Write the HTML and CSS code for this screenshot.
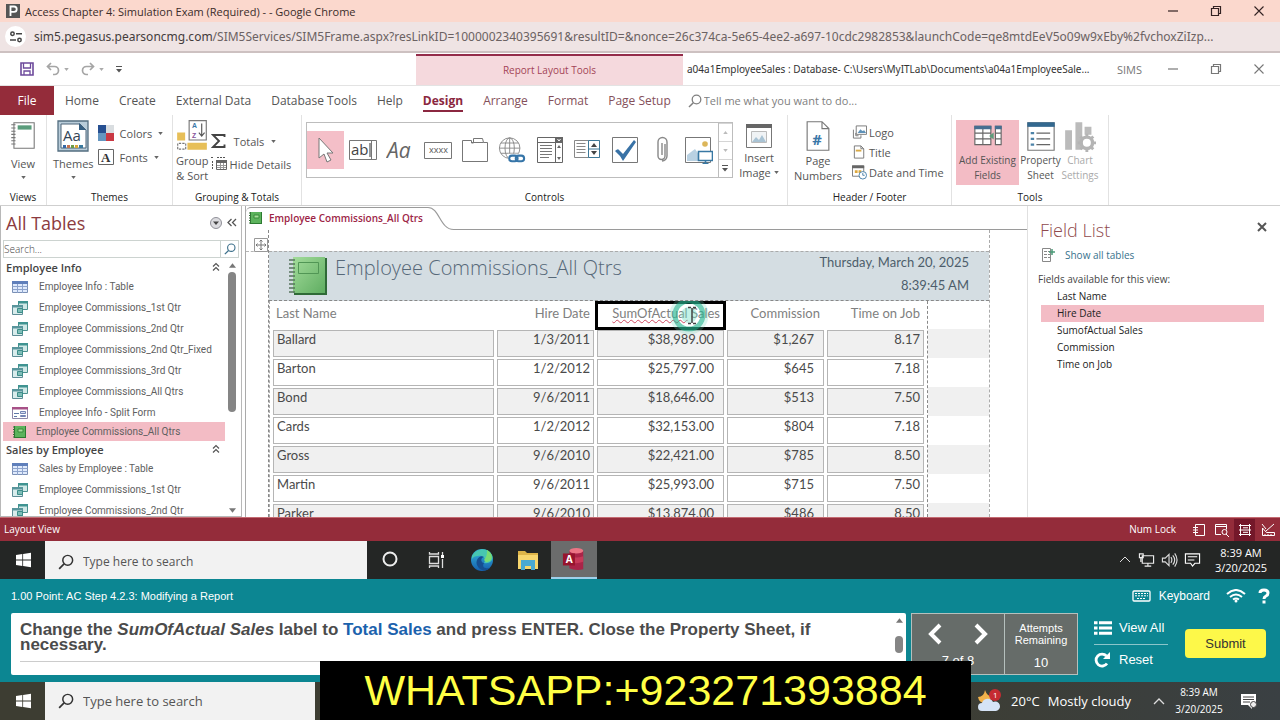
FILE: index.html
```html
<!DOCTYPE html>
<html lang="en">
<head>
<meta charset="utf-8">
<title>Access Chapter 4: Simulation Exam (Required)</title>
<link rel="stylesheet" href="styles.css">
</head>
<body>
<svg class="defs" aria-hidden="true">
  <defs>
    <linearGradient id="green" x1="0" y1="0" x2="1" y2="1"><stop offset="0" stop-color="#a3dc9b"/><stop offset="1" stop-color="#5fad61"/></linearGradient>
    <linearGradient id="edgeblue" x1="0" y1="0" x2="0" y2="1"><stop offset="0" stop-color="#35b6d8"/><stop offset="1" stop-color="#1560b0"/></linearGradient>
  </defs>
  <symbol id="search" viewBox="0 0 14 14"><circle cx="8.5" cy="5.5" r="4.3" fill="none" stroke="currentColor" stroke-width="1.3"/><path d="M5.3 8.7 1 13" stroke="currentColor" stroke-width="1.5"/></symbol>
  <symbol id="min" viewBox="0 0 12 12"><path d="M1 6h10" stroke="currentColor" stroke-width="1.2"/></symbol>
  <symbol id="restore" viewBox="0 0 12 12"><path d="M1.500 3.500h7v7h-7zM3.500 3.500v-2h7v7h-2" fill="none" stroke="currentColor" stroke-width="1.2"/></symbol>
  <symbol id="close" viewBox="0 0 12 12"><path d="m1.500 1.500 9 9m0-9-9 9" stroke="currentColor" stroke-width="1.100"/></symbol>
  <symbol id="win" viewBox="0 0 16 16"><path fill="#fff" d="M1 2.900 7.300 2v5.600H1zM8.100 1.900 16 .8v6.800H8.100zM1 8.400h6.300V14L1 13.100zM8.100 8.400H16v6.800l-7.900-1.100z"/></symbol>
  <symbol id="table" viewBox="0 0 16 14"><path fill="#dfeafc" stroke="#7b90b5" d="M.5 1.500h15v11H.5z"/><path fill="#5f7fbb" d="M0 1h16v3H0z"/><path stroke="#8da3cc" d="M.5 6.500h15M.5 9.500h15M5.500 4v9M10.500 4v9"/></symbol>
  <symbol id="query" viewBox="0 0 16 14"><path fill="#cfe8e6" stroke="#4c918f" d="M6.500.500h9v8h-9z"/><path fill="#3f9391" d="M6 0h10v2.500H6z"/><path fill="#d8ecec" stroke="#5d8d96" d="M.5 4.500h10v9h-10z"/><path fill="#58959c" d="M0 4h11v2.500H0z"/><path d="M5.500 7.500h5v4h-5z" fill="#7fbdb8" stroke="#3b8d88"/></symbol>
  <symbol id="form" viewBox="0 0 16 14"><path fill="#fff" stroke="#8d86a8" d="M.5 1.500h15v11H.5z"/><path fill="#a75187" d="M0 1h16v2.500H0z"/><path stroke="#5f79a8" d="M2 7.500h5M2 10.500h3"/><path fill="#d8dff0" stroke="#7385b5" d="M8.500 5.500h5v2h-5zM8.500 9.500h5v1h-5z"/></symbol>
  <symbol id="book" viewBox="0 0 14 14"><path fill="#2c7a31" d="M2 1h12v12H2z"/><path fill="#5cb35c" d="M3 1h10v11H3z"/><path d="M6 4h5v3H6z" fill="#a8df9c" stroke="#388b3b"/><path d="M1 2h2M1 4.500h2M1 7h2M1 9.500h2M1 12h2" stroke="#366e39"/></symbol>
  <symbol id="chev2" viewBox="0 0 8 10"><path d="m1 4.500 3-3 3 3m-6 4 3-3 3 3" fill="none" stroke="#555" stroke-width="1.200"/></symbol>
  <symbol id="down" viewBox="0 0 6 4"><path d="M0 0h6L3 4z" fill="currentColor"/></symbol>
</svg>

<header class="chrome-title">
  <svg class="i14" viewBox="0 0 14 14"><path fill="#555" d="M0 0h14v14H0z"/><path d="M4.500 12V2.500h3.500a2.700 2.700 0 0 1 0 5.400H4.500" fill="none" stroke="#fff" stroke-width="1.800"/></svg>
  <span class="grow">Access Chapter 4: Simulation Exam (Required) - - Google Chrome</span>
  <div class="winbtns"><button aria-label="Minimize"><svg><use href="#min"/></svg></button><button aria-label="Restore"><svg><use href="#restore"/></svg></button><button aria-label="Close"><svg><use href="#close"/></svg></button></div>
</header>
<div class="urlbar">
  <button class="site" aria-label="Site information"><svg viewBox="0 0 14 14"><g fill="none" stroke="#444" stroke-width="1.500"><circle cx="3.500" cy="3.800" r="1.700"/><path d="M7 3.800h6M1 10h6"/><circle cx="10.500" cy="10" r="1.700"/></g></svg></button>
  <span class="url"><b>sim5.pegasus.pearsoncmg.com</b>/SIM5Services/SIM5Frame.aspx?resLinkID=1000002340395691&amp;resultID=&amp;nonce=26c374ca-5e65-4ee2-a697-10cdc2982853&amp;launchCode=qe8mtdEeV5o09w9xEby%2fvchoxZiIzp...</span>
</div>

<div class="app-title">
  <div class="quick">
    <button aria-label="Save"><svg class="i14" viewBox="0 0 14 14"><path d="M1 1h12v12H1z" fill="#fff" stroke="#6d4a9c" stroke-width="1.600"/><path d="M3.500 1v5h7V1M4 13V9h6v4" fill="none" stroke="#6d4a9c" stroke-width="1.300"/></svg></button>
    <button aria-label="Undo"><svg class="i14" viewBox="0 0 14 14"><path d="M5 1 1.500 4.500 5 8M2 4.500h6.500a4 4 0 0 1 0 8H7" fill="none" stroke="#a5a5a5" stroke-width="1.700"/></svg><svg class="arr"><use href="#down"/></svg></button>
    <button aria-label="Redo"><svg class="i14" viewBox="0 0 14 14"><path d="m9 1 3.500 3.500L9 8M12 4.500H5.500a4 4 0 0 0 0 8H7" fill="none" stroke="#a5a5a5" stroke-width="1.700"/></svg><svg class="arr"><use href="#down"/></svg></button>
    <button aria-label="Customize toolbar"><svg class="more" viewBox="0 0 6 7"><path d="M0 .5h6" stroke="#555"/><path d="M0 3h6L3 6.500z" fill="#555"/></svg></button>
  </div>
  <div class="context">Report Layout Tools</div>
  <span class="db">a04a1EmployeeSales : Database- C:\Users\MyITLab\Documents\a04a1EmployeeSale...</span>
  <span class="sims">SIMS</span>
  <div class="winbtns pale"><button aria-label="Minimize database"><svg><use href="#min"/></svg></button><button aria-label="Restore database"><svg><use href="#restore"/></svg></button><button aria-label="Close database"><svg><use href="#close"/></svg></button></div>
</div>

<nav class="tabs">
  <button class="file">File</button><button>Home</button><button>Create</button><button>External Data</button><button>Database Tools</button><button>Help</button>
  <button class="ctx active">Design</button><button class="ctx">Arrange</button><button class="ctx">Format</button><button class="ctx">Page Setup</button>
  <label class="tell"><svg class="i14"><use href="#search"/></svg><input type="text" placeholder="Tell me what you want to do..." aria-label="Tell me what you want to do"></label>
</nav>

<section class="ribbon">
  <div class="group g-views">
    <div class="tools"><button class="big"><svg viewBox="0 0 24 30"><path d="M3.500 2.500h19v24h-19z" fill="#fff" stroke="#777"/><path fill="#5a9c7b" d="M7 5h13v4H7z"/><path d="M1 4.500h4M1 7.500h4M1 10.500h4M1 13.500h4M1 16.500h4M1 19.500h4M1 22.500h4" stroke="#777"/></svg>View<svg class="arr"><use href="#down"/></svg></button></div><h2>Views</h2>
  </div>
  <div class="group g-themes">
    <div class="tools"><button class="big"><svg viewBox="0 0 32 32"><path d="M1 1h30v30H1z" fill="#b8ccd9" stroke="#536e80" stroke-width="1.300"/><path d="M4 4h19l6 6v18H4z" fill="#fff" stroke="#4d6579"/><path d="M22 3v7h7z" fill="#365f82"/><text x="6" y="21" class="svg-aa">Aa</text><path d="M6 26.500h3" stroke="#3767a5" stroke-width="3"/><path d="M10 26.500h3" stroke="#c5714e" stroke-width="3"/><path d="M14 26.500h3" stroke="#6b9c48" stroke-width="3"/><path d="M18 26.500h3" stroke="#d9a536" stroke-width="3"/><path d="M22 26.500h4" stroke="#3b7a9e" stroke-width="3"/></svg>Themes<svg class="arr"><use href="#down"/></svg></button>
    <div class="stack themes-stack"><button><svg viewBox="0 0 16 16"><path fill="#264f91" d="M0 0h8v8H0z"/><path fill="#d9dde0" d="M8 0h8v8H8z"/><path fill="#6395c0" d="M0 8h8v8H0z"/><path fill="#c93843" d="M8 8h8v8H8z"/></svg>Colors<svg class="arr"><use href="#down"/></svg></button><button><svg viewBox="0 0 16 16"><path fill="#fff" stroke="#666" d="M.5.5h15v15H.5z"/><text x="3" y="13" class="svg-a">A</text></svg>Fonts<svg class="arr"><use href="#down"/></svg></button></div></div><h2>Themes</h2>
  </div>
  <div class="group g-grouping">
    <div class="tools"><button class="big"><svg viewBox="0 0 28 28"><path d="M1 11h7v7H1zM10 20h17v6H10z" fill="#e7bf58"/><path d="M1.500 20.500v5h7v-5z" fill="#fff" stroke="#777" stroke-dasharray="2 1"/><path d="M11.500.500h15v17h-15z" fill="#fff" stroke="#777"/><text x="14" y="7" class="svg-az blue">A</text><text x="14" y="16" class="svg-az purple">Z</text><path d="M22.500 3v11m-2.500-3 2.500 3 2.500-3" fill="none" stroke="#555"/></svg>Group<br>&amp; Sort</button>
    <div class="stack totals-stack"><button><svg viewBox="0 0 16 16"><path d="M13.500 4V2H2l6 6-6 6h11.500v-2.500" fill="none" stroke="#444" stroke-width="1.900"/></svg>Totals<svg class="arr"><use href="#down"/></svg></button><button><svg viewBox="0 0 16 16"><path d="M1.500 5v9M0 1.500h3M6 1.500h9" stroke="#555" stroke-dasharray="2 1"/><path fill="#fff" stroke="#666" d="M5.500 4.500h10v9h-10z"/><path fill="#666" d="M5 4h11v3H5z"/><path stroke="#999" d="M6 9.500h9M6 11.500h9M9.500 7v6M12.500 7v6"/></svg>Hide Details</button></div></div><h2>Grouping &amp; Totals</h2>
  </div>
  <div class="group g-controls">
    <div class="tools">
      <div class="gallery">
        <button class="on" aria-label="Select"><svg viewBox="0 0 28 28"><path d="M7 2v20l5-4 3 8 4-2-4-7h6z" fill="#fff" stroke="#777"/></svg></button>
        <button aria-label="Text box"><svg viewBox="0 0 28 28"><path d="M.5 4.500h27v19H.5z" fill="#fff" stroke="#777"/><path d="M22.500 5v18" stroke="#777"/><text x="2" y="19" class="svg-ab">ab</text><path d="M21 7v14" stroke="#333"/></svg></button>
        <button aria-label="Label"><svg viewBox="0 0 28 28"><text x="1" y="22" class="svg-label">Aa</text></svg></button>
        <button aria-label="Button"><svg viewBox="0 0 28 28"><path d="M.5 6.500h27v16H.5z" fill="#fff" stroke="#777"/><text x="5" y="17" class="svg-x">xxxx</text></svg></button>
        <button aria-label="Tab control"><svg viewBox="0 0 28 28"><path d="M1.500 4.500h9V7h2V2.500h9l1 4h4v19h-25zM10.500 6.500h12" fill="#fff" stroke="#777"/></svg></button>
        <button aria-label="Link"><svg viewBox="0 0 30 30"><g fill="none" stroke="#888"><circle cx="12.500" cy="13" r="11"/><ellipse cx="12.500" cy="13" rx="5" ry="11"/><path d="M12.500 2v22M1.500 13h22M3 7.500h19M3 18.500h19"/></g><path d="M11 19h18v9H11z" fill="#fff"/><g fill="none" stroke="#3675a8" stroke-width="2.200"><rect x="12" y="21" width="9" height="6" rx="3"/><rect x="19" y="21" width="9" height="6" rx="3"/></g></svg></button>
        <button aria-label="Combo box"><svg viewBox="0 0 28 28"><path d="M1.500 1.500h25v25h-25zM1.500 6.500h25M19.500 1v25" fill="#fff" stroke="#666"/><path fill="#666" d="M20 1h7v6h-7zM21 12l2-3 2 3zM21 21l2 3 2-3z"/><path d="m21.500 3 1.500 2 1.500-2" stroke="#fff" fill="none"/><path stroke="#777" d="M4 9.500h12M4 12.500h12M4 15.500h12M4 18.500h12M4 21.500h9"/></svg></button>
        <button aria-label="List box"><svg viewBox="0 0 28 28"><path d="M1.500 4.500h25v17h-25z" fill="#fff" stroke="#888"/><path d="M15.500 4.500h11v17h-11zM15.500 13h11" fill="#fff" stroke="#3e7999"/><path d="M3.500 7.500h9M3.500 10.500h9M3.500 13.500h9M3.500 16.500h9" stroke="#888"/><path d="m18 11 3-4 3 4zM18 15h6l-3 4z" fill="#444"/></svg></button>
        <button aria-label="Check box"><svg viewBox="0 0 28 28"><path d="M1.500 1.500h25v25h-25z" fill="#fff" stroke="#777"/><path d="M4 15q3-3 4-1l4 4L23 4l2 2-13 19q-3-6-8-10z" fill="#3972a6"/></svg></button>
        <button aria-label="Attachment"><svg viewBox="0 0 28 28"><path d="M17 8v12a3.500 3.500 0 0 1-7 0V6a4.500 4.500 0 0 1 9 0v14a5 5 0 0 1-5 5M14 7v12" fill="none" stroke="#888" stroke-width="1.400"/></svg></button>
        <button aria-label="Image"><svg viewBox="0 0 28 28"><path d="M.5 1.500h25v25H.5z" fill="#fff" stroke="#777"/><circle cx="20" cy="8" r="2.800" fill="#dcb65a"/><path d="M2 25V19l8-6 5 7v5z" fill="#b9d1e2"/><path d="M13.500 15.500h14v9h-14zM20.500 25v2m-3 .5h6" fill="#fff" stroke="#3878a3" stroke-width="1.600"/></svg></button>
        <div class="scroller"><button aria-label="Up"><svg class="arr up"><use href="#down"/></svg></button><button aria-label="Down"><svg class="arr"><use href="#down"/></svg></button><button aria-label="More controls"><svg class="more" viewBox="0 0 6 7"><path d="M0 .5h6" stroke="#555"/><path d="M0 3h6L3 6.500z" fill="#555"/></svg></button></div>
      </div>
      <button class="big insert"><svg viewBox="0 0 28 26"><path d="M1.500 1.500h25v23h-25z" fill="#fff" stroke="#777"/><path fill="#666" d="M1 1h26v4H1z"/><path d="M6.500 8.500h15v11h-15z" fill="#f0f3f5" stroke="#bbb"/><path d="m7 19 4-5 3 3 3-5 4 7z" fill="#a9c3d4"/></svg>Insert<span>Image <svg class="arr"><use href="#down"/></svg></span></button>
    </div><h2>Controls</h2>
  </div>
  <div class="group g-header">
    <div class="tools"><button class="big"><svg viewBox="0 0 22 28"><path d="M1.500 1.500h13l6 6v19h-19zM14.500 1.500v6h6" fill="#fff" stroke="#777"/><text x="6" y="22" class="svg-hash">#</text></svg>Page<br>Numbers</button>
    <div class="stack header-stack"><button><svg viewBox="0 0 16 16"><path d="M4.500 1.500h11v9h-11z" fill="#fff" stroke="#777"/><path d="m6 9 3-4 2 2 2-1 2 3z" fill="#5e91b8"/><path d="M1.500 5.500v9h8v-3M4 9v3h3" fill="none" stroke="#777"/></svg>Logo</button><button><svg viewBox="0 0 16 16"><path d="M2.500 1.500h7l3 3v10h-10zM9.500 1.500v3h3" fill="#fff" stroke="#777"/><path d="M4 6.500h6" stroke="#d8a945" stroke-width="2"/></svg>Title</button><button><svg viewBox="0 0 16 16"><path d="M.5 1.500h12v11H.5z" fill="#fff" stroke="#777"/><path d="M0 1h13v3H0z" fill="#666"/><path d="M3 6h3v3H3zM7 6h3v3H7z" fill="#dda83d"/><circle cx="11.500" cy="11.500" r="4" fill="#fff" stroke="#4780aa"/><path d="M11.500 9v2.500h2" fill="none" stroke="#4780aa"/></svg>Date and Time</button></div></div><h2>Header / Footer</h2>
  </div>
  <div class="group g-tools">
    <div class="tools">
      <button class="big on"><svg viewBox="0 0 26 28"><path d="M1.500 5.500h14v16h-14zM1.500 11.500h14M1.500 16.500h14M8.500 5v16M19.500 5.500h5v16h-5zM19.500 11.500h5M19.500 16.500h5" fill="#fff" stroke="#666"/><path fill="#466e91" d="M1 5h15v3H1zM19 5h6v3h-6z"/><path fill="#5e9c7a" d="m14 14 4-3v6z"/></svg>Add Existing<br>Fields</button>
      <button class="big"><svg viewBox="0 0 26 28"><path d="M1.500 2.500h23v24h-23z" fill="#fff" stroke="#777"/><path fill="#33688f" d="M1 2h24v4H1z"/><path d="M9 11.500h12M9 16.500h12M9 21.500h12" stroke="#666"/><path d="M4 11.500h3M4 16.500h3M4 21.500h3" stroke="#4d83a8" stroke-width="2"/></svg>Property<br>Sheet</button>
      <button class="big off" disabled><svg viewBox="0 0 28 28"><path d="M1 9h6v17H1zM10 2h6v24h-6zM18 6h6v7h-6z" fill="#bbb"/><circle cx="20" cy="20" r="5" fill="#fff" stroke="#b4b4b4" stroke-width="3"/><path d="M20 12v3m0 10v3m-8-8h3m10 0h3m-13.600-5.600 2.200 2.200m6.800 6.800 2.200 2.200m0-11.200-2.200 2.200m-6.800 6.800-2.200 2.200" stroke="#b4b4b4" stroke-width="2.500"/></svg>Chart<br>Settings</button>
    </div><h2>Tools</h2>
  </div>
</section>

<main class="work">
  <aside class="navpane">
    <div class="nav-head"><h1>All Tables</h1><button aria-label="Filter"><svg viewBox="0 0 14 14"><circle cx="7" cy="7" r="5.500" fill="#dcdce0" stroke="#909098"/><path d="M4 5.500h6L7 9z" fill="#444"/></svg></button><button aria-label="Collapse pane"><svg viewBox="0 0 14 14"><path d="M6.500 3 3 6.500 6.500 10m4.500-7L7.500 6.500 11 10" fill="none" stroke="#555" stroke-width="1.300"/></svg></button></div>
    <label class="nav-search"><input type="text" placeholder="Search..." aria-label="Search objects"><span><svg><use href="#search"/></svg></span></label>
    <div class="nav-body">
      <div class="nav-list">
        <h3>Employee Info <svg><use href="#chev2"/></svg></h3>
        <ul>
          <li><svg><use href="#table"/></svg>Employee Info : Table</li>
          <li><svg><use href="#query"/></svg>Employee Commissions_1st Qtr</li>
          <li><svg><use href="#query"/></svg>Employee Commissions_2nd Qtr</li>
          <li><svg><use href="#query"/></svg>Employee Commissions_2nd Qtr_Fixed</li>
          <li><svg><use href="#query"/></svg>Employee Commissions_3rd Qtr</li>
          <li><svg><use href="#query"/></svg>Employee Commissions_All Qtrs</li>
          <li><svg><use href="#form"/></svg>Employee Info - Split Form</li>
          <li class="sel"><svg><use href="#book"/></svg>Employee Commissions_All Qtrs</li>
        </ul>
        <h3>Sales by Employee <svg><use href="#chev2"/></svg></h3>
        <ul>
          <li><svg><use href="#table"/></svg>Sales by Employee : Table</li>
          <li><svg><use href="#query"/></svg>Employee Commissions_1st Qtr</li>
          <li><svg><use href="#query"/></svg>Employee Commissions_2nd Qtr</li>
        </ul>
      </div>
      <div class="vbar"><svg class="up"><use href="#down"/></svg><i></i><svg><use href="#down"/></svg></div>
    </div>
  </aside>

  <section class="doc">
    <div class="doc-tabs"><div class="doc-tab"><svg class="i14"><use href="#book"/></svg>Employee Commissions_All Qtrs</div><svg class="slope" viewBox="0 0 24 24" preserveAspectRatio="none"><path d="M0 1.500c10 0 10 22 22 22h2" fill="none" stroke="#9a9a9a"/></svg></div>
    <div class="canvas">
      <div class="gutter"><svg viewBox="0 0 14 14"><path d="M.5.500h13v13H.5z" fill="#fff" stroke="#999"/><path d="M7 2v10M2 7h10M5.500 3.500 7 2l1.500 1.500m-3 7L7 12l1.500-1.500m-5-5L2 7l1.500 1.500m7-3L12 7l-1.500 1.500" fill="none" stroke="#777"/></svg></div>
      <div class="page">
        <div class="page-top"></div>
        <div class="report-head">
          <svg viewBox="0 0 42 42"><path d="M6 3h33v37H6z" fill="#2f6a37"/><path d="M5 2h32v36H5z" fill="url(#green)"/><path d="M10.500 7.500h20v11h-20z" fill="none" stroke="#519655"/><path d="M1 5h6M1 9h6M1 13h6M1 17h6M1 21h6M1 25h6M1 29h6M1 33h6M1 37h6" stroke="#56735c" stroke-width="1.500"/></svg>
          <h1>Employee Commissions_All Qtrs</h1>
          <div class="stamp"><span>Thursday, March 20, 2025</span><span>8:39:45 AM</span></div>
        </div>
        <div class="report-body">
          <div class="frame">
            <table>
              <colgroup><col class="c1"><col class="c2"><col class="c3"><col class="c4"><col class="c5"></colgroup>
              <thead><tr><th>Last Name</th><th>Hire Date</th><th class="editing"><span>SumOfActual</span> Sales
                <svg class="pointer" viewBox="0 0 40 40"><circle cx="20" cy="20" r="14" fill="none" stroke="#27b590" stroke-opacity=".65" stroke-width="5"/><circle cx="20" cy="20" r="18" fill="none" stroke="#6ed8bd" stroke-opacity=".25" stroke-width="3"/><circle cx="20" cy="20" r="8" fill="#79e3ca" fill-opacity=".45"/><path d="M19 12.500h3m2 0h3M19 28.500h3m2 0h3M23 13v15" stroke="#444" stroke-width="1.500"/></svg></th><th>Commission</th><th>Time on Job</th></tr></thead>
              <tbody>
                <tr><td>Ballard</td><td>1/3/2011</td><td>$38,989.00</td><td>$1,267</td><td>8.17</td></tr>
                <tr><td>Barton</td><td>1/2/2012</td><td>$25,797.00</td><td>$645</td><td>7.18</td></tr>
                <tr><td>Bond</td><td>9/6/2011</td><td>$18,646.00</td><td>$513</td><td>7.50</td></tr>
                <tr><td>Cards</td><td>1/2/2012</td><td>$32,153.00</td><td>$804</td><td>7.18</td></tr>
                <tr><td>Gross</td><td>9/6/2010</td><td>$22,421.00</td><td>$785</td><td>8.50</td></tr>
                <tr><td>Martin</td><td>9/6/2011</td><td>$25,993.00</td><td>$715</td><td>7.50</td></tr>
                <tr><td>Parker</td><td>9/6/2010</td><td>$13,874.00</td><td>$486</td><td>8.50</td></tr>
              </tbody>
            </table>
          </div>
          <div class="stripes"></div>
        </div>
      </div>
    </div>
  </section>

  <aside class="fields">
    <div class="fields-head"><h1>Field List</h1><button aria-label="Close field list"><svg viewBox="0 0 12 12"><path d="m2 2 8 8m0-8-8 8" stroke="#555" stroke-width="2"/></svg></button></div>
    <a href="#"><svg class="i14" viewBox="0 0 14 14"><path d="M1.500.500h8v13h-8z" fill="#fff" stroke="#888"/><path d="M3 3.500h3M3 6.500h3M3 9.500h3M7 3.500h2M7 6.500h2M7 9.500h2" stroke="#888"/><path d="M11 1v6M8 4h6" stroke="#4b9a78" stroke-width="1.500"/></svg>Show all tables</a>
    <p>Fields available for this view:</p>
    <ul><li>Last Name</li><li class="sel">Hire Date</li><li>SumofActual Sales</li><li>Commission</li><li>Time on Job</li></ul>
  </aside>
</main>

<footer class="status">
  <span class="grow">Layout View</span><span class="num">Num Lock</span>
  <button aria-label="Report view"><svg viewBox="0 0 14 14"><path d="M3.500 1.500h9v11h-9zM1 4.500h5M1 7h5M1 9.500h5" fill="none" stroke="#fff"/></svg></button>
  <button aria-label="Print preview"><svg viewBox="0 0 14 14"><path d="M6 11.500H.5v-10h11v5M.5 3.500h11" fill="none" stroke="#fff"/><circle cx="9.500" cy="9" r="2.500" fill="none" stroke="#fff"/><path d="m11 11 3 3" stroke="#fff"/></svg></button>
  <button class="on" aria-label="Layout view"><svg viewBox="0 0 14 14"><path d="M2.500 1v12M11.500 1v12M1 2.500h12M1 7h12M1 11.500h12M5 4.800h5M5 9.300h5" fill="none" stroke="#fff"/></svg></button>
  <button aria-label="Design view"><svg viewBox="0 0 14 14"><path d="M1.500 5v7.500h12v-3h-8zM5 8l8-7M1 1l4 5M4 11v1m3-1v1m3-1v1" fill="none" stroke="#fff"/></svg></button>
</footer>

<div class="taskbar one">
  <button class="start" aria-label="Simulated start"><svg><use href="#win"/></svg></button>
  <label class="tb-search"><svg><use href="#search"/></svg><input type="text" placeholder="Type here to search" aria-label="Type here to search in simulation"></label>
  <div class="apps">
    <button aria-label="Cortana"><svg viewBox="0 0 24 24"><circle cx="12" cy="11" r="6.500" fill="none" stroke="#eee" stroke-width="2"/></svg></button>
    <button aria-label="Task view"><svg viewBox="0 0 24 24"><path d="M5.500 8.500h9v7h-9zM5.500 4v2h9V4M5.500 20v-2h9v2M18.500 4v4m0 3v9" fill="none" stroke="#ddd" stroke-width="1.300"/><path fill="#fff" d="M17 7h3v3h-3z"/></svg></button>
    <button aria-label="Edge"><svg viewBox="0 0 24 24"><circle cx="12" cy="12" r="11" fill="url(#edgeblue)"/><path d="M2 8C5 1 18-2 22 7c2 5-2 9-8 8 3-5-2-8-6-7-3 0-5 1-6 3z" fill="#47c7b0"/><path d="M14 15c-3 0-4-5 0-6-4-3-9 3-7 8 2 6 9 7 13 3-3 1-9 0-6-5z" fill="#164f91"/><path d="M17 2c6 3 7 12-1 12l-2-2c3-3 3-7 3-10z" fill="#79dc72"/></svg></button>
    <button aria-label="File Explorer"><svg viewBox="0 0 24 24"><path d="M2 3h7l2 2h11v16H2z" fill="#ddb449"/><path d="M2 7h20v14H2z" fill="#f7d66e"/><path d="M5 12h14v10h-4v-4H9v4H5z" fill="#4aa9d2"/></svg></button>
    <button class="on" aria-label="Access"><svg viewBox="0 0 26 26"><path d="M8 4h15v20q-8 2-15-1z" fill="#aa2448"/><ellipse cx="15.500" cy="4" rx="7.500" ry="3" fill="#ec7484"/><path d="M8 10q7 3 15 0v6q-8 3-15 0z" fill="#c73959"/><path d="M1 7h13v13H1z" fill="#97142d"/><text x="4" y="17" class="svg-acc">A</text></svg></button>
  </div>
  <div class="tray">
    <svg viewBox="0 0 14 14"><path d="m2 9 5-5 5 5" fill="none" stroke="#ddd"/></svg>
    <svg viewBox="0 0 18 16"><path d="M4.500 3.500h12v8h-12zM7 14.500h7m-3.500-3v3M1.500 1.500h4v4h-4zM3 6v4" fill="none" stroke="#eee" stroke-width="1.200"/></svg>
    <svg viewBox="0 0 18 16"><path d="M1.500 6h3l4-4v12l-4-4h-3zM10.500 5q2 3 0 6m2-8q4 5 0 10m2-12q5 7 0 14" fill="none" stroke="#ddd" stroke-width="1.200"/></svg>
    <svg viewBox="0 0 18 16"><path d="M1.500 1.500h15v10h-5l-2.500 3-2-3h-5.500zM4 4.500h10M4 8h7" fill="none" stroke="#fff" stroke-width="1.200"/></svg>
  </div>
  <time>8:39 AM<br>3/20/2025</time>
</div>

<section class="exam">
  <div class="exam-top"><span class="grow">1.00 Point: AC Step 4.2.3: Modifying a Report</span>
    <button><svg class="kb" viewBox="0 0 19 12"><rect x="1" y="1" width="17" height="10" rx="1" fill="none" stroke="#fff" stroke-width="1.300"/><path d="M3 3.500h13M3 5.800h13M5 8.500h9" stroke="#fff" stroke-dasharray="2 1"/></svg>Keyboard</button>
    <svg class="wifi" viewBox="0 0 20 14"><path d="M1 5q9-8 18 0M4 8q6-5 12 0M7 10.500q3-2 6 0" fill="none" stroke="#fff" stroke-width="2"/><circle cx="10" cy="12" r="1.500" fill="#fff"/></svg>
    <button class="help" aria-label="Help"><svg viewBox="0 0 12 16"><path d="M2 5q0-3 4-3t4 3q0 2-2 3t-2 3" fill="none" stroke="#fff" stroke-width="3"/><path d="M4.500 12.500h3v3h-3z" fill="#fff"/></svg></button>
  </div>
  <div class="exam-main">
    <div class="task"><div class="task-text"><p>Change the <em>SumOfActual Sales</em> label to <strong>Total Sales</strong> and press ENTER. Close the Property Sheet, if necessary.</p><hr></div><div class="vbar"><svg class="up"><use href="#down"/></svg><i></i></div></div>
    <div class="counter">
      <div class="steps"><div><button aria-label="Previous"><svg viewBox="0 0 16 22"><path d="M13 2 4 11l9 9" fill="none" stroke="#fff" stroke-width="4"/></svg></button><button aria-label="Next"><svg viewBox="0 0 16 22"><path d="m3 2 9 9-9 9" fill="none" stroke="#fff" stroke-width="4"/></svg></button></div><span>7 of 8</span></div>
      <div class="attempts"><span>Attempts Remaining</span><span>10</span></div>
    </div>
    <div class="links"><button><svg viewBox="0 0 18 14"><path d="M0 1.800h3.500M0 7h3.500M0 12.200h3.500M5 1.800h13M5 7h13M5 12.200h13" stroke="#fff" stroke-width="3"/></svg>View All</button><button><svg viewBox="0 0 18 16"><path d="M13 11.500a6 6 0 1 1-.5-7.500" fill="none" stroke="#fff" stroke-width="2.800"/><path d="M16 0v7H9z" fill="#fff"/></svg>Reset</button></div>
    <button class="submit">Submit</button>
  </div>
</section>

<div class="taskbar two">
  <button class="start" aria-label="Start"><svg><use href="#win"/></svg></button>
  <label class="tb-search"><svg><use href="#search"/></svg><input type="text" placeholder="Type here to search" aria-label="Type here to search"></label>
  <div class="weather"><svg viewBox="0 0 26 24"><path d="M8 1q-1 7-7 7 1 6 7 6t6-7Q10 7 8 1z" fill="#f1b14a"/><path d="M5 22a4 4 0 0 1 0-8 6 6 0 0 1 11-1 4.800 4.800 0 1 1 3 9z" fill="#d5e3f6"/><circle cx="18" cy="6" r="6" fill="#c52c32"/><text x="16" y="9" class="svg-one">1</text></svg><span>20°C</span><span>Mostly cloudy</span></div>
  <svg class="caret" viewBox="0 0 14 14"><path d="m2 10 5-5 5 5" fill="none" stroke="#ddd" stroke-width="1.300"/></svg>
  <time>8:39 AM<br>3/20/2025</time>
  <button class="note" aria-label="Notifications"><svg viewBox="0 0 18 18"><path d="M1 2h15v11h-4v4l-4-4H1z" fill="#fff"/><path d="M3 5h11M3 7.500h11M3 10h7" stroke="#444"/><circle cx="13.500" cy="12.500" r="3" fill="#eee" stroke="#444"/></svg></button>
</div>
<div class="banner">WHATSAPP:+923271393884</div>
</body>
</html>
```

FILE: styles.css
```css
* { box-sizing: border-box; }
body { margin: 0; height: 100vh; display: flex; flex-direction: column; overflow: hidden; position: relative; background: #fff; color: #444; font: 11px/15px "Open Sans", "Noto Sans", sans-serif; }
button { border: 0; background: none; padding: 0; margin: 0; font: inherit; color: inherit; white-space: nowrap; }
input { border: 0; background: none; padding: 0; font: inherit; color: inherit; min-width: 0; outline: 0; }
input::placeholder { color: inherit; opacity: 1; }
h1, h2, h3, ul { margin: 0; padding: 0; font-weight: 400; list-style: none; }
p { margin: 0; }
svg { flex: none; display: block; }
.defs { position: absolute; width: 0; height: 0; }
.grow { flex: 1; }
.i14 { width: 14px; height: 14px; }
.arr { width: 5px; height: 3px; color: #666; }
.up { transform: rotate(180deg); }
.more { width: 6px; height: 7px; }

.chrome-title { flex: none; height: 22px; display: flex; align-items: center; gap: 5px; padding: 0 15px 0 6px; background: #fbd8cd; color: #3a2c2a; }
.winbtns { display: flex; gap: 31px; color: #322; }
.winbtns svg { width: 12px; height: 12px; }
.winbtns.pale { color: #777; }
.urlbar { flex: none; height: 31px; display: flex; align-items: center; gap: 8px; padding: 0 20px 0 5px; background: #efe4e4; border-bottom: 2px solid #cdc1c1; color: #6b6262; font-family: "Noto Sans", sans-serif; font-size: 12px; }
.site { width: 21px; height: 21px; border-radius: 50%; background: #fff; display: grid; place-items: center; }
.site svg { width: 14px; height: 14px; }
.url { white-space: nowrap; overflow: hidden; }
.url b { font-weight: 400; color: #443c3c; }

.app-title { flex: none; height: 33px; display: flex; align-items: center; padding-right: 15px; border-bottom: 1px solid #e3e3e3; }
.quick { width: 416px; display: flex; align-items: center; gap: 12px; padding-left: 20px; }
.quick button { display: flex; align-items: center; gap: 4px; }
.quick .arr { color: #aaa; }
.context { align-self: stretch; width: 267px; margin-top: 1px; border-top: 2px solid #942c4a; background: #f5d9dd; color: #a34457; font-size: 10px; display: grid; place-items: center; }
.db { flex: 1; padding-left: 4px; color: #333; font-family: "Noto Sans", sans-serif; font-size: 10px; white-space: nowrap; }
.sims { margin-right: 25px; color: #777; font-size: 11px; }

.tabs { flex: none; height: 29px; display: flex; align-items: stretch; gap: 20px; font-size: 12px; color: #555; }
.tabs .file { width: 54px; margin-right: -9px; background: #942c3a; color: #fff; }
.tabs .ctx { color: #84505a; }
.tabs .active { color: #8b2740; font-weight: 700; box-shadow: inset 0 -3px #fff, inset 0 -5px #8b2740; }
.tell { flex: 1; display: flex; align-items: center; gap: 2px; margin-left: -3px; font-size: 11px; color: #808080; }
.tell input { flex: 1; }

.ribbon { flex: none; height: 91px; display: flex; border-bottom: 1px solid #cfcfcf; color: #555; }
.group { display: flex; flex-direction: column; border-right: 1px solid #e2e2e2; padding-top: 5px; }
.g-views { width: 47px; } .g-themes { width: 126px; } .g-grouping { width: 129px; } .g-controls { width: 486px; } .g-header { width: 164px; } .g-tools { width: 157px; }
.group h2 { font-size: 10px; line-height: 16px; text-align: center; color: #222; font-weight: 500; }
.tools { flex: 1; display: flex; gap: 4px; padding: 0 4px; }
.big { display: flex; flex-direction: column; align-items: center; text-align: center; line-height: 15px; }
.big > svg:first-child { width: 32px; height: 32px; margin-bottom: 1px; }
.g-views .big > svg:first-child, .g-themes .big > svg:first-child { margin-bottom: 4px; }
.big > .arr { margin-top: 5px; }
.g-views .tools { justify-content: center; }
.g-themes .tools { padding-left: 6px; gap: 2px; }
.stack { display: flex; flex-direction: column; align-items: flex-start; }
.stack button { display: flex; align-items: center; gap: 6px; }
.stack button > svg:first-child { width: 16px; height: 16px; }
.themes-stack { gap: 8px; padding: 5px 0 0 2px; }
.totals-stack { gap: 7px; padding-top: 13px; }
.totals-stack button { gap: 3px; }
.totals-stack button:first-child { gap: 7px; }
.header-stack { gap: 4px; padding: 4px 0 0 4px; }
.header-stack button { gap: 2px; }
.header-stack button > svg:first-child { width: 15px; height: 16px; }
.g-grouping .tools { gap: 2px; padding-left: 3px; }
.gallery { flex: 1; height: 56px; margin-top: 2px; display: flex; align-items: center; border: 1px solid #bdbdbd; }
.gallery > button { flex: 1; height: 38px; display: grid; place-items: center; }
.gallery > button svg { width: 28px; height: 28px; }
.gallery .on { background: #f4bfc8; }
.scroller { width: 14px; align-self: stretch; display: flex; flex-direction: column; border-left: 1px solid #bdbdbd; }
.scroller button { flex: 1; display: grid; place-items: center; border-top: 1px solid #d5d5d5; }
.scroller .arr { color: #bbb; }
.insert { width: 52px; padding-top: 3px; }
.big.insert > svg:first-child { width: 28px; height: 26px; }
.insert span { display: flex; align-items: center; gap: 3px; }
.g-controls .tools { padding-right: 2px; gap: 0; }
.g-header .big { width: 52px; }
.g-tools .tools { gap: 0; padding-right: 0; }
.g-tools .big { width: 43px; font-size: 10px; }
.g-tools .big.on { width: 63px; height: 65px; background: #f3bcc5; }
.g-tools .big.off { width: 36px; color: #aaa; }
.svg-aa { font: 15px "Open Sans"; fill: #345; }
.svg-a { font: bold 13px "Liberation Serif"; fill: #333; }
.svg-az { font: bold 6px "Liberation Sans"; }
.blue { fill: #3b77a8; } .purple { fill: #86529b; }
.svg-ab { font: 15px "Open Sans"; fill: #444; }
.svg-label { font: italic 21px "Open Sans"; fill: #666; }
.svg-x { font: 9px "Open Sans"; fill: #555; }
.svg-hash { font: bold 13px "Open Sans"; fill: #3b77a8; }

.work { flex: 1; min-height: 0; display: flex; }
.navpane { width: 242px; display: flex; flex-direction: column; border: 1px solid #b8b8b8; border-top: 0; padding: 0 2px; }
.nav-head { flex: none; display: flex; align-items: center; gap: 2px; height: 34px; padding-left: 3px; }
.nav-head h1 { flex: 1; font-size: 18px; line-height: 26px; color: #8c3b40; }
.nav-head svg { width: 14px; height: 14px; }
.nav-search { flex: none; display: flex; height: 18px; border: 1px solid #ccd3d0; font-size: 10px; font-weight: 300; }
.nav-search input { flex: 1; }
.nav-search span { width: 18px; border-left: 1px solid #ccd3d0; display: grid; place-items: center; color: #3e718c; }
.nav-search svg { width: 12px; height: 12px; }
.nav-body { flex: 1; min-height: 0; display: flex; }
.nav-list { flex: 1; overflow: hidden; font: 300 10px/14px Roboto, sans-serif; color: #606060; }
.nav-list h3 { display: flex; justify-content: space-between; align-items: center; height: 18px; padding: 0 5px 0 3px; font: 600 11px/15px "Open Sans", sans-serif; color: #444; }
.nav-list h3 svg { width: 8px; height: 10px; }
.nav-list li { height: 21px; display: flex; align-items: center; gap: 11px; padding-left: 9px; white-space: nowrap; }
.nav-list li svg { width: 16px; height: 14px; }
.nav-list .sel { height: 19px; margin: -1px 0; gap: 9px; padding-left: 8px; }
.sel { background: #f3bcc5; }
.vbar { width: 14px; display: flex; flex-direction: column; align-items: center; gap: 4px; padding: 5px 0 3px; color: #777; }
.vbar svg { width: 7px; height: 5px; }
.vbar i { width: 8px; height: 140px; border-radius: 4px; background: #858585; }
.nav-body .vbar svg:last-child { margin-top: auto; }

.doc { flex: 1; min-width: 0; margin-left: 3px; border-left: 1px solid #aaa; display: flex; flex-direction: column; }
.doc-tabs { flex: none; display: flex; height: 24px; background: linear-gradient(#9a9a9a, #9a9a9a) 210px 23px / 100% 1px no-repeat; }
.doc-tab { width: 182px; display: flex; align-items: center; gap: 7px; border-top: 1px solid #9a9a9a; border-radius: 5px 0 0; padding: 0 0 2px 2px; margin-top: 1px; white-space: nowrap; color: #9d2546; font-size: 10px; font-weight: 600; }
.slope { width: 28px; height: 24px; }
.canvas { flex: 1; min-height: 0; display: flex; }
.gutter { width: 22px; padding: 8px 0 0 8px; height: 22px; border-bottom: 1px dashed #b5b5b5; }
.gutter svg { width: 14px; height: 14px; }
.page { width: 722px; border-left: 1px dashed #888; border-right: 1px dashed #aaa; display: flex; flex-direction: column; }
.page-top { flex: none; height: 21px; }
.report-head { flex: none; height: 50px; display: flex; background: #d4dde2; border-top: 1px dashed #aaa; border-bottom: 1px dashed #888; padding: 3px 20px 0 19px; color: #4d5d6b; }
.report-head svg { width: 42px; height: 42px; }
.report-head h1 { flex: 1; padding-left: 5px; font: 300 20px/25px "Open Sans", sans-serif; color: #566878; white-space: nowrap; }
.stamp { display: flex; flex-direction: column; align-items: flex-end; gap: 8px; font: 13px/15px Lato, sans-serif; }
.report-body { flex: 1; min-height: 0; display: flex; }
.frame { width: 659px; overflow: hidden; border-left: 1px dashed #aaa; border-right: 1px dashed #888; }
.stripes { flex: 1; margin-top: 28px; background: repeating-linear-gradient(#f0f0f0 0 29px, #fff 29px 58px); }
table { table-layout: fixed; width: 657px; border-collapse: separate; border-spacing: 3px 2px; font: 13px/16px Lato, sans-serif; }
.c1 { width: 221px; } .c2 { width: 97px; } .c3 { width: 127px; } .c4 { width: 97px; } .c5 { width: 97px; }
th { height: 25px; padding: 2px 4px 2px 3px; font-weight: 400; text-align: right; vertical-align: top; color: #808080; }
td { height: 27px; padding: 0 3px; border: 1px solid #b5b5b5; text-align: right; vertical-align: top; color: #4a4a4a; }
th:first-child, td:first-child { text-align: left; }
tbody tr:nth-child(odd) td { background: #f0f0f0; }
td:nth-child(3), td:nth-child(4) { padding-right: 9px; }
.editing { position: relative; outline: 3px solid #000; outline-offset: -1px; white-space: nowrap; background: #fff; }
.editing span { text-decoration: underline wavy #d04860 1px; text-underline-offset: 1px; }
.pointer { position: absolute; right: 15px; top: -8px; width: 40px; height: 40px; }

.fields { width: 253px; border-left: 1px solid #e0e0e0; padding: 11px 12px 0 11px; font-size: 10px; color: #222; }
.fields-head { display: flex; justify-content: space-between; align-items: flex-start; padding-left: 1px; }
.fields-head h1 { font-size: 18px; line-height: 26px; font-weight: 300; color: #8f4a4c; }
.fields-head svg { width: 12px; height: 12px; margin-top: 4px; }
.fields a { display: flex; align-items: center; gap: 10px; height: 24px; padding-left: 2px; color: #39728d; text-decoration: none; }
.fields p { line-height: 24px; margin-left: -1px; color: #444; }
.fields ul { margin: -3px 4px 0 2px; }
.fields li { line-height: 17px; padding-left: 16px; }

.status { flex: none; height: 24px; display: flex; align-items: center; gap: 2px; padding: 0 2px 0 4px; background: #942c3a; border-top: 1px solid #c46b72; color: #fff; font-size: 10px; }
.num { margin-right: 10px; }
.status button { width: 21px; height: 22px; display: grid; place-items: center; }
.status .on { background: #74182a; }
.status svg { width: 14px; height: 14px; }

.taskbar { flex: none; height: 38px; display: flex; align-items: center; color: #fff; }
.one { background: #242625; }
.two { background: linear-gradient(90deg, #3d3d32, #3d3d32 900px, #3a4043); }
.start { width: 45px; height: 38px; display: grid; place-items: center; }
.start svg { width: 16px; height: 16px; }
.tb-search { width: 322px; align-self: stretch; display: flex; align-items: center; gap: 9px; padding: 3px 0 0 13px; background: #f2f2f2; color: #555; font-size: 12px; }
.tb-search svg { width: 16px; height: 16px; color: #333; }
.tb-search input { flex: 1; }
.two .tb-search { width: 270px; padding-top: 0; font-size: 13px; }
.apps { flex: 1; display: flex; align-self: stretch; }
.apps button { width: 46px; display: grid; place-items: center; }
.apps .on { background: #6b6c6c; border-bottom: 2px solid #9fd0ea; }
.apps svg { width: 24px; height: 24px; }
.svg-acc { font: bold 11px "Open Sans"; fill: #fff; }
.svg-one { font: 8px "Open Sans"; fill: #fff; }
.tray { display: flex; align-items: center; gap: 6px; margin-right: 10px; }
.tray svg { width: 17px; height: 16px; }
.tray svg:first-child { width: 14px; }
time { width: 60px; text-align: center; font-size: 11px; line-height: 15px; }
.one time { margin-right: 9px; }
.weather { margin-left: auto; display: flex; align-items: center; gap: 8px; font-size: 13px; white-space: nowrap; }
.weather svg { width: 26px; height: 24px; }
.caret { width: 14px; height: 14px; margin: 0 3px 0 21px; }
.two time { font-size: 10px; line-height: 17px; }
.note { margin: 0 22px 0 11px; }
.note svg { width: 18px; height: 18px; }

.exam { flex: none; height: 103px; padding: 0 14px 0 11px; background: #0c8692; color: #fff; font: 11px/14px "Liberation Sans", sans-serif; }
.exam-top { display: flex; align-items: center; height: 34px; margin-right: -4px; }
.exam-top button { display: flex; align-items: center; gap: 8px; font-size: 12px; }
.kb { width: 19px; height: 12px; }
.wifi { width: 20px; height: 14px; margin: 0 12px 0 16px; }
.help svg { width: 12px; height: 16px; }
.exam-main { display: flex; height: 62px; }
.task { flex: 1; min-width: 0; display: flex; background: #fff; color: #4b4b4b; border-radius: 2px; }
.task-text { flex: 1; padding: 9px 0 0 9px; font-size: 17px; line-height: 15px; font-weight: 700; }
.task strong { color: #1b62ad; }
.task hr { margin: 9px 0 0; border: 0; border-top: 1px solid #ccc; }
.task .vbar i { height: 17px; margin-top: 9px; }
.counter { display: flex; margin-left: 5px; background: #666c69; border: 1px solid #b5c0bd; text-align: center; }
.steps { width: 93px; border-right: 1px solid #b5c0bd; font-size: 13px; }
.steps div { display: flex; justify-content: center; gap: 30px; height: 40px; align-items: center; }
.steps svg { width: 16px; height: 22px; }
.attempts { width: 72px; padding-top: 8px; display: flex; flex-direction: column; gap: 11px; line-height: 12px; }
.attempts span:last-child { font-size: 13px; }
.links { width: 74px; margin-left: 16px; display: flex; flex-direction: column; font-size: 13px; }
.links button { flex: 1; display: flex; align-items: center; gap: 7px; }
.links button:first-child { border-bottom: 1px solid #8bc5ca; }
.links svg { width: 18px; height: 16px; }
.submit { width: 81px; height: 29px; margin: 16px 0 0 17px; border-radius: 4px; background: #fdf849; color: #333; font-size: 13px; }
.banner { position: absolute; left: 25%; bottom: 0; width: 651px; height: 59px; background: #000; color: #ffff45; text-align: center; white-space: nowrap; font: 43px/59px "Liberation Sans", sans-serif; }
```
